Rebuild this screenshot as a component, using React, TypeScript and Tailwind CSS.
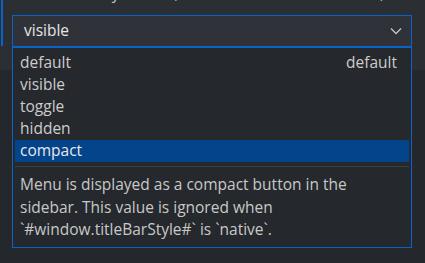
const options = ['default', 'visible', 'toggle', 'hidden', 'compact'];

export default function App() {
  const selected = 'compact';

  return (
    <div
      className="relative w-[425px] h-[263px] overflow-hidden bg-[#24272b] text-[15.5px] text-[#cccccc]"
      style={{ fontFamily: '"Open Sans", "Noto Sans", sans-serif' }}
    >
      {/* setting row (focused) */}
      <div className="h-[70px] bg-[#2b2e33] flex">
        <div className="ml-[1px] w-[2px] h-[46px] bg-[#0a64c8]" />
        <div className="flex flex-col pl-[9px]">
          {/* tail of the setting description, scrolled mostly out of view */}
          <div className="h-[15px] overflow-hidden relative">
            <p className="absolute left-0 top-[-18px] leading-[22px] whitespace-nowrap text-[#c8c8c8]">
              the sidebar. By default, the menu bar will be visible, unless full screen.
            </p>
          </div>
          <div className="w-[400px] h-[32px] border border-[#0a64c8] bg-[#2f3238] flex items-center justify-between pl-[11px] pr-[9px]">
            <span className="text-[#e6e6e6]">visible</span>
            <svg width="12" height="8" viewBox="0 0 12 8" fill="none">
              <path d="M1 1.5 L6 6.5 L11 1.5" stroke="#c5c5c5" strokeWidth="1.3" />
            </svg>
          </div>
        </div>
      </div>

      {/* dropdown list */}
      <div className="absolute left-[12px] top-[47px] w-[400px] h-[201px] border border-[#0a64c8] bg-[#25282c] px-[2px] pt-[4px]">
        {options.map((o) => (
          <div
            key={o}
            className={`h-[22px] flex items-center justify-between pl-[5px] pr-[12px] ${
              o === selected ? 'bg-[#04448a] text-[#e8e8e8]' : ''
            }`}
          >
            <span>{o}</span>
            {o === 'default' && <span>default</span>}
          </div>
        ))}
        <div className="mt-[4px] h-px bg-[#3a3d42]" />
        <p className="pl-[5px] pr-[10px] pt-[6px] leading-[22.5px] text-[#c8c8c8]">
          Menu is displayed as a compact button in the sidebar. This value is ignored when
          `#window.titleBarStyle#` is `native`.
        </p>
      </div>
    </div>
  );
}
